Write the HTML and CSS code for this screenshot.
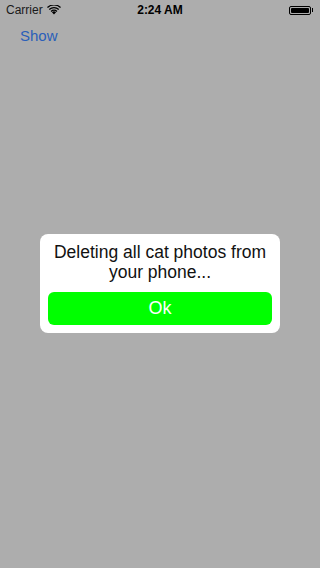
FILE: index.html
```html
<!DOCTYPE html>
<html>
<head>
<meta charset="utf-8">
<link rel="stylesheet" href="styles.css">
</head>
<body>
<div class="screen">
  <div class="status">
    <div class="status-left">
      <span class="carrier">Carrier</span>
      <svg class="wifi" width="14" height="10" viewBox="0 0 14 10">
        <path d="M7 9.6 L9.1 7.3 A3 3 0 0 0 4.9 7.3 Z" fill="#000"/>
        <path d="M3.6 5.9 A4.9 4.9 0 0 1 10.4 5.9 L9.5 6.9 A3.6 3.6 0 0 0 4.5 6.9 Z" fill="#000"/>
        <path d="M1.8 4.0 A7.5 7.5 0 0 1 12.2 4.0 L11.3 5.0 A6.2 6.2 0 0 0 2.7 5.0 Z" fill="#000"/>
        <path d="M0 2.1 A10 10 0 0 1 14 2.1 L13.1 3.1 A8.7 8.7 0 0 0 0.9 3.1 Z" fill="#000"/>
      </svg>
    </div>
    <div class="time">2:24 AM</div>
    <div class="status-right">
      <div class="battery"><div class="battery-fill"></div></div>
      <div class="battery-tip"></div>
    </div>
  </div>
  <div class="nav">
    <span class="show">Show</span>
  </div>
  <div class="stage">
    <div class="dialog">
      <p class="message">Deleting all cat photos from your phone...</p>
      <div class="ok">Ok</div>
    </div>
  </div>
</div>
</body>
</html>
```

FILE: styles.css
```css
* { box-sizing: border-box; }
html, body { margin: 0; padding: 0; }
body {
  width: 320px;
  height: 568px;
  background: #adadad;
  font-family: "Liberation Sans", Arial, sans-serif;
  overflow: hidden;
}
.screen {
  width: 320px;
  height: 568px;
  display: flex;
  flex-direction: column;
}
.status {
  height: 20px;
  display: flex;
  align-items: center;
  justify-content: space-between;
  padding: 0 6px;
  position: relative;
  color: #000;
}
.status-left {
  display: flex;
  align-items: center;
  gap: 4px;
  font-size: 12px;
  color: #1a1a1a;
}
.wifi { margin-top: -1px; }
.time {
  position: absolute;
  left: 0;
  right: 0;
  text-align: center;
  font-size: 12px;
  font-weight: bold;
  color: #000;
  pointer-events: none;
}
.status-right {
  display: flex;
  align-items: center;
  margin-right: 1px;
}
.battery {
  width: 22px;
  height: 9px;
  border: 1px solid #000;
  border-radius: 2px;
  padding: 1px;
}
.battery-fill {
  width: 100%;
  height: 100%;
  background: #000;
  border-radius: 1px;
}
.battery-tip {
  width: 1.5px;
  height: 4px;
  background: #000;
  margin-left: 1px;
}
.nav {
  height: 31px;
  display: flex;
  align-items: center;
  padding-left: 20px;
}
.show {
  font-size: 15px;
  color: #2a5fb9;
  margin-top: -1px;
}
.stage {
  flex: 1;
  display: flex;
  flex-direction: column;
  align-items: center;
  padding-top: 183px;
}
.dialog {
  width: 240px;
  background: #fff;
  border-radius: 8px;
  padding: 8px 8px 8px;
  display: flex;
  flex-direction: column;
  align-items: stretch;
}
.message {
  margin: 0;
  font-size: 17.5px;
  line-height: 20px;
  text-align: center;
  color: #111;
  padding: 0;
}
.ok {
  margin-top: 10px;
  height: 33px;
  background: #00ff00;
  border-radius: 6px;
  color: #fff;
  font-size: 18px;
  display: flex;
  align-items: center;
  justify-content: center;
}
```
